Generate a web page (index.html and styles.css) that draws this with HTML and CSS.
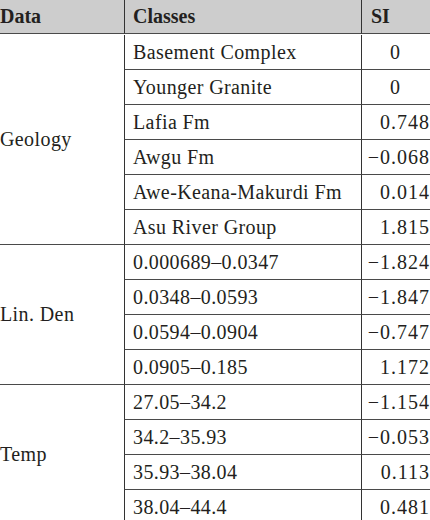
FILE: index.html
```html
<!DOCTYPE html>
<html>
<head>
<meta charset="utf-8">
<link rel="stylesheet" href="styles.css">
</head>
<body>
<div class="tbl">
  <div class="c1 hd">Data</div>
  <div class="c2 hd">Classes</div>
  <div class="c3 hd si-h">SI</div>

  <div class="c1 grp g6">Geology</div>
  <div class="c2">Basement Complex</div><div class="c3 zero">0</div>
  <div class="c2">Younger Granite</div><div class="c3 zero">0</div>
  <div class="c2">Lafia Fm</div><div class="c3">0.748</div>
  <div class="c2">Awgu Fm</div><div class="c3">−0.068</div>
  <div class="c2">Awe-Keana-Makurdi Fm</div><div class="c3">0.014</div>
  <div class="c2">Asu River Group</div><div class="c3">1.815</div>

  <div class="c1 grp g4">Lin. Den</div>
  <div class="c2">0.000689–0.0347</div><div class="c3">−1.824</div>
  <div class="c2">0.0348–0.0593</div><div class="c3">−1.847</div>
  <div class="c2">0.0594–0.0904</div><div class="c3">−0.747</div>
  <div class="c2">0.0905–0.185</div><div class="c3">1.172</div>

  <div class="c1 grp g4">Temp</div>
  <div class="c2">27.05–34.2</div><div class="c3">−1.154</div>
  <div class="c2">34.2–35.93</div><div class="c3">−0.053</div>
  <div class="c2">35.93–38.04</div><div class="c3">0.113</div>
  <div class="c2">38.04–44.4</div><div class="c3">0.481</div>
</div>
</body>
</html>
```
FILE: styles.css
```css
html, body {
  margin: 0;
  padding: 0;
  background: #fff;
  overflow: hidden;
}
body {
  width: 430px;
  height: 520px;
  font-family: "Liberation Serif", "Times New Roman", serif;
  font-size: 20px;
  letter-spacing: 0.4px;
  color: #231f20;
}
.tbl {
  display: grid;
  grid-template-columns: 124px 237px 69px;
  grid-auto-rows: 35px;
  width: 430px;
}
.tbl > div {
  box-sizing: border-box;
  border-bottom: 1px solid #4a4a4a;
  display: flex;
  align-items: center;
  white-space: nowrap;
}
.hd {
  background: #cdcdcd;
  font-weight: bold;
  height: 34px;
  border-bottom: 1px solid #3a3a3a;
  letter-spacing: 0;
}
.c1 {
  grid-column: 1;
  padding-left: 0;
}
.c2 {
  grid-column: 2;
  border-left: 1px solid #333;
  padding-left: 8px;
}
.c3 {
  grid-column: 3;
  border-left: 1px solid #333;
  justify-content: flex-end;
  padding-right: 0;
  letter-spacing: 1px;
}
.si-h {
  justify-content: flex-start;
  padding-left: 9px;
  letter-spacing: 0;
}
.c3.zero {
  justify-content: flex-start;
  padding-left: 28px;
}
.grp {
  align-self: stretch;
}
.g6 { grid-row: span 6; }
.g4 { grid-row: span 4; }
```
